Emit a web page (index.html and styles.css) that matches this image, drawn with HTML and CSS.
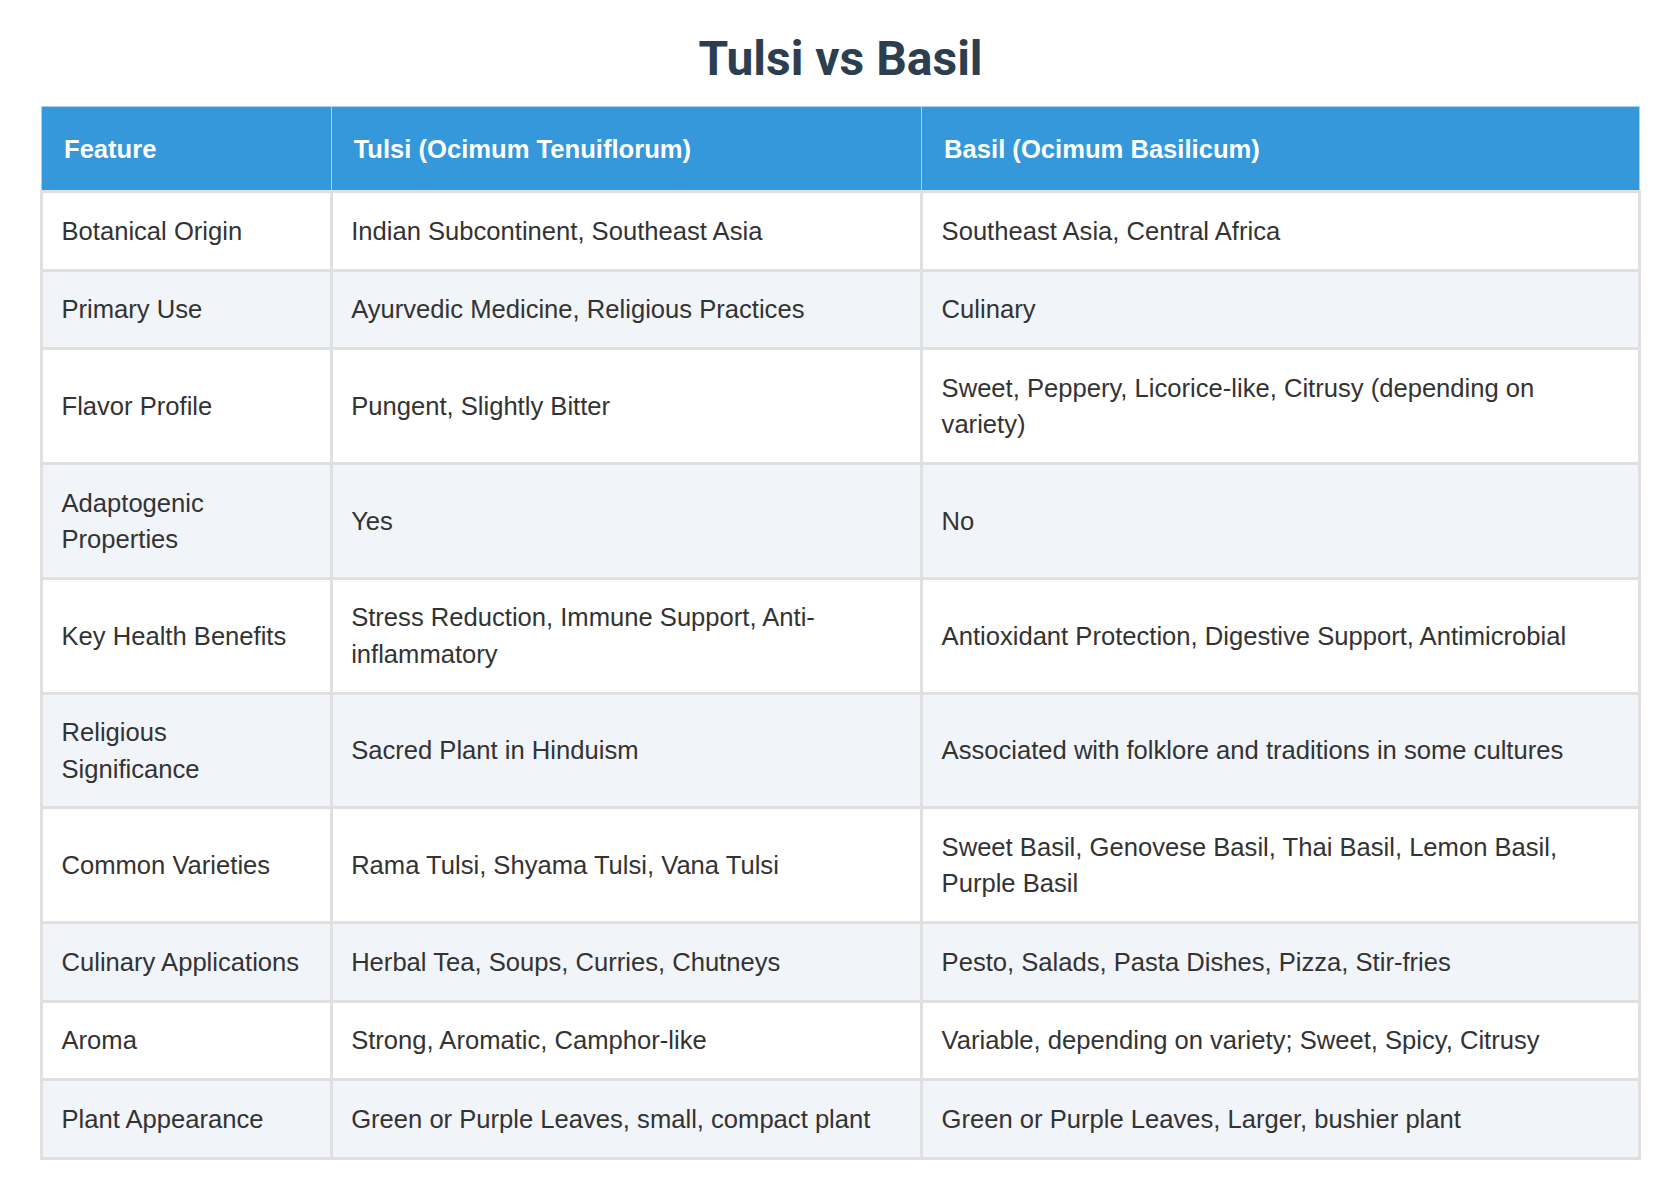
FILE: index.html
```html
<!DOCTYPE html>
<html lang="en">
<head>
<meta charset="utf-8">
<title>Tulsi vs Basil</title>
<link rel="stylesheet" href="styles.css">
</head>
<body>
<div class="page">
  <h1 class="title">Tulsi vs Basil</h1>
  <table class="compare">
    <thead>
      <tr>
        <th>Feature</th>
        <th>Tulsi (Ocimum Tenuiflorum)</th>
        <th>Basil (Ocimum Basilicum)</th>
      </tr>
    </thead>
    <tbody>
      <tr><td>Botanical Origin</td><td>Indian Subcontinent, Southeast Asia</td><td>Southeast Asia, Central Africa</td></tr>
      <tr><td>Primary Use</td><td>Ayurvedic Medicine, Religious Practices</td><td>Culinary</td></tr>
      <tr><td>Flavor Profile</td><td>Pungent, Slightly Bitter</td><td>Sweet, Peppery, Licorice-like, Citrusy (depending on variety)</td></tr>
      <tr><td>Adaptogenic Properties</td><td>Yes</td><td>No</td></tr>
      <tr><td>Key Health Benefits</td><td>Stress Reduction, Immune Support, Anti-inflammatory</td><td>Antioxidant Protection, Digestive Support, Antimicrobial</td></tr>
      <tr><td>Religious Significance</td><td>Sacred Plant in Hinduism</td><td>Associated with folklore and traditions in some cultures</td></tr>
      <tr><td>Common Varieties</td><td>Rama Tulsi, Shyama Tulsi, Vana Tulsi</td><td>Sweet Basil, Genovese Basil, Thai Basil, Lemon Basil, Purple Basil</td></tr>
      <tr><td>Culinary Applications</td><td>Herbal Tea, Soups, Curries, Chutneys</td><td>Pesto, Salads, Pasta Dishes, Pizza, Stir-fries</td></tr>
      <tr><td>Aroma</td><td>Strong, Aromatic, Camphor-like</td><td>Variable, depending on variety; Sweet, Spicy, Citrusy</td></tr>
      <tr><td>Plant Appearance</td><td>Green or Purple Leaves, small, compact plant</td><td>Green or Purple Leaves, Larger, bushier plant</td></tr>
    </tbody>
  </table>
</div>
</body>
</html>
```

FILE: styles.css
```css
html, body {
  margin: 0;
  padding: 0;
  background: #ffffff;
}

body {
  font-family: "Liberation Sans", Arial, sans-serif;
  color: #333333;
}

.page {
  padding: 31px 39px 40px 40px;
}

.title {
  font-family: Roboto, "Liberation Sans", sans-serif;
  font-weight: 700;
  font-size: 48px;
  line-height: 56px;
  color: #2c3e50;
  text-align: center;
  margin: 0 0 19px 0;
}

.compare {
  width: 100%;
  border-collapse: collapse;
  font-size: 25.6px;
  line-height: 36.3px;
}

.compare th {
  background: #3498db;
  color: #ffffff;
  font-weight: 700;
  text-align: left;
  padding: 23.5px 22px;
  border: 1px solid #a9d2f1;
}

.compare td {
  padding: 19.6px 18.5px;
  border: 3px solid #e0e0e0;
  text-align: left;
  vertical-align: middle;
}

.compare tbody tr:nth-child(even) td {
  background: #f1f4f9;
}

.compare tbody tr:nth-child(odd) td {
  background: #ffffff;
}
```
